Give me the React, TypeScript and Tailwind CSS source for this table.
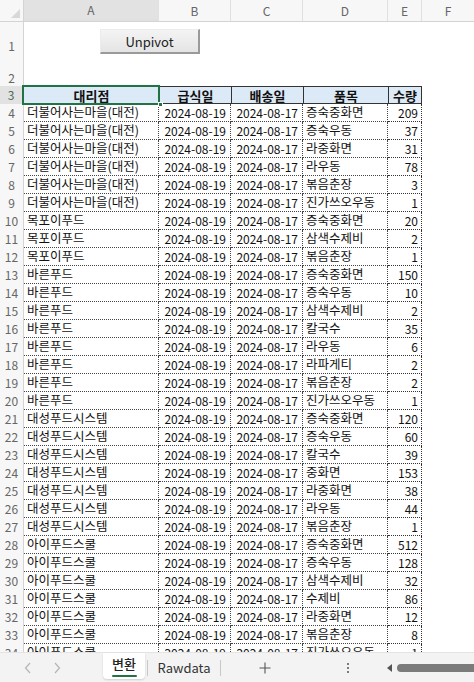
import React from "react";

const font = { fontFamily: '"Noto Sans CJK KR", "Noto Sans", sans-serif' };

type Row = [string, string, string, string, number];

const shops: [string, [string, number][]][] = [
  ["더불어사는마을(대전)", [["증숙중화면", 209], ["증숙우동", 37], ["라중화면", 31], ["라우동", 78], ["볶음춘장", 3], ["진가쓰오우동", 1]]],
  ["목포이푸드", [["증숙중화면", 20], ["삼색수제비", 2], ["볶음춘장", 1]]],
  ["바른푸드", [["증숙중화면", 150], ["증숙우동", 10], ["삼색수제비", 2], ["칼국수", 35], ["라우동", 6], ["라파게티", 2], ["볶음춘장", 2], ["진가쓰오우동", 1]]],
  ["대성푸드시스템", [["증숙중화면", 120], ["증숙우동", 60], ["칼국수", 39], ["중화면", 153], ["라중화면", 38], ["라우동", 44], ["볶음춘장", 1]]],
  ["아이푸드스쿨", [["증숙중화면", 512], ["증숙우동", 128], ["삼색수제비", 32], ["수제비", 86], ["라중화면", 12], ["볶음춘장", 8], ["진가쓰오우동", 1]]],
];

const rows: Row[] = shops.flatMap(([shop, items]) =>
  items.map(([item, qty]) => [shop, "2024-08-19", "2024-08-17", item, qty] as Row)
);

const cols = [
  { key: "A", w: "w-[135px]" },
  { key: "B", w: "w-[72px]" },
  { key: "C", w: "w-[72px]" },
  { key: "D", w: "w-[85px]" },
  { key: "E", w: "w-[34px]" },
  { key: "F", w: "flex-1" },
];

const RowHead = ({ n, h, active }: { n: number; h: string; active?: boolean }) => (
  <div
    className={`w-[24px] shrink-0 ${h} flex items-center justify-center text-[12px] leading-none border-r border-[#d4d4d4] ${
      active ? "bg-[#e2e2e2] text-[#4d6b58] border-r-2 border-r-[#217346]" : "bg-[#f7f7f7] text-[#666]"
    }`}
  >
    {n}
  </div>
);

export default function App() {
  return (
    <div className="w-[474px] h-[682px] flex flex-col bg-white overflow-hidden" style={font}>
      {/* column headers */}
      <div className="h-[22px] flex shrink-0 border-b border-[#d4d4d4] bg-[#f7f7f7]">
        <div className="w-[24px] shrink-0 border-r border-[#d4d4d4] relative">
          <div className="absolute right-[3px] bottom-[3px] w-0 h-0 border-l-[9px] border-l-transparent border-b-[9px] border-b-[#d8d8d8]" />
        </div>
        {cols.map((c, i) => (
          <div
            key={c.key}
            className={`${c.w} shrink-0 flex items-center justify-center text-[12px] leading-none text-[#666] ${
              i === 0 ? "bg-[#e2e2e2] border-b-2 border-[#217346] text-[#3c5a47]" : ""
            } ${i < 5 ? "border-r border-[#e0e0e0]" : ""}`}
          >
            {c.key}
          </div>
        ))}
      </div>

      {/* sheet body */}
      <div className="flex-1 overflow-hidden">
        {/* row 1 */}
        <div className="flex h-[48px]">
          <RowHead n={1} h="h-[48px]" />
          <div className="flex-1">
            <div className="ml-[76px] mt-[7px] w-[100px] h-[25px] flex items-center justify-center text-[13px] leading-none text-[#222] bg-gradient-to-b from-[#f4f4f4] to-[#e4e4e4] border-r-2 border-b-2 border-r-[#9a9a9a] border-b-[#9a9a9a] border-l border-t border-l-[#ececec] border-t-[#ececec]">
              Unpivot
            </div>
          </div>
        </div>
        {/* row 2 */}
        <div className="flex h-[16px]">
          <RowHead n={2} h="h-[16px]" />
          <div className="flex-1" />
        </div>
        {/* row 3 header */}
        <div className="flex h-[18px]">
          <RowHead n={3} h="h-[18px]" active />
          <div className="w-[135px] shrink-0 relative bg-[#dce9f6] border-y border-[#333] flex items-center justify-center text-[13px] leading-none font-bold text-[#111]">
            대리점
            <div className="absolute -left-[2px] -top-[2px] -right-[1px] -bottom-[2px] border-2 border-[#217346]" />
            <div className="absolute -right-[4px] -bottom-[4px] w-[5px] h-[5px] bg-[#217346] border border-white" />
          </div>
          {["급식일", "배송일", "품목", "수량"].map((t, i) => (
            <div
              key={t}
              className={`${cols[i + 1].w} shrink-0 bg-[#dce9f6] border-y border-l border-[#333] ${
                i === 3 ? "border-r" : ""
              } flex items-center justify-center text-[13px] leading-none font-bold text-[#111]`}
            >
              {t}
            </div>
          ))}
        </div>
        {/* data rows */}
        {rows.map((r, idx) => (
          <div key={idx} className="flex h-[18px] leading-none">
            <RowHead n={idx + 4} h="h-[18px]" />
            <div className="w-[135px] shrink-0 border-b border-r border-dotted border-[#444] pl-[3px] flex items-center text-[12.5px] text-[#111] whitespace-nowrap">
              {r[0]}
            </div>
            <div className="w-[72px] shrink-0 border-b border-r border-dotted border-[#444] pr-[4px] flex items-center justify-end text-[12px] text-[#111]">
              {r[1]}
            </div>
            <div className="w-[72px] shrink-0 border-b border-r border-dotted border-[#444] pr-[4px] flex items-center justify-end text-[12px] text-[#111]">
              {r[2]}
            </div>
            <div className="w-[85px] shrink-0 border-b border-r border-dotted border-[#444] pl-[3px] flex items-center text-[12.5px] text-[#111] whitespace-nowrap">
              {r[3]}
            </div>
            <div className="w-[34px] shrink-0 border-b border-r border-dotted border-[#333] pr-[3px] flex items-center justify-end text-[12px] text-[#111]">
              {r[4]}
            </div>
            <div className="flex-1" />
          </div>
        ))}
      </div>

      {/* sheet tab bar */}
      <div className="h-[30px] shrink-0 bg-[#f3f3f3] border-t border-[#e4e4e4] flex items-center text-[13px] leading-none">
        <div className="w-[100px] shrink-0 flex items-center pl-[24px] gap-[21px]">
          <svg width="8" height="12" viewBox="0 0 8 12">
            <path d="M6 1 L1.5 6 L6 11" fill="none" stroke="#b5b5b5" strokeWidth="1.2" />
          </svg>
          <svg width="8" height="12" viewBox="0 0 8 12">
            <path d="M2 1 L6.5 6 L2 11" fill="none" stroke="#b5b5b5" strokeWidth="1.2" />
          </svg>
        </div>
        <div className="h-[26px] self-start w-[42px] shrink-0 ml-[3px] bg-white rounded-b-[4px] shadow-[0_1px_2px_rgba(0,0,0,0.15)] flex flex-col items-center justify-center">
          <span className="text-[13px] text-[#222] font-medium leading-[14px] mt-[1px]">변환</span>
          <div className="w-[25px] h-[2px] bg-[#217346] rounded mt-[4px]" />
        </div>
        <div className="w-px h-[16px] shrink-0 bg-[#c8c8c8] ml-[2px]" />
        <div className="w-[72px] shrink-0 text-center text-[#333]">Rawdata</div>
        <div className="w-px h-[16px] shrink-0 bg-[#c8c8c8]" />
        <div className="w-[88px] shrink-0 flex justify-center">
          <svg width="12" height="12" viewBox="0 0 12 12">
            <path d="M6 0.5 V11.5 M0.5 6 H11.5" stroke="#555" strokeWidth="1.1" />
          </svg>
        </div>
        <div className="w-[78px] shrink-0 flex justify-center">
          <svg width="4" height="14" viewBox="0 0 4 14">
            <circle cx="2" cy="3" r="1" fill="#555" />
            <circle cx="2" cy="7" r="1" fill="#555" />
            <circle cx="2" cy="11" r="1" fill="#555" />
          </svg>
        </div>
        <svg width="6" height="8" viewBox="0 0 6 8" className="shrink-0 mr-[4px]">
          <path d="M5 0 L0 4 L5 8 Z" fill="#555" />
        </svg>
        <div className="flex-1 h-[8px] bg-[#7b7b7b] rounded-l-full" />
      </div>
    </div>
  );
}
